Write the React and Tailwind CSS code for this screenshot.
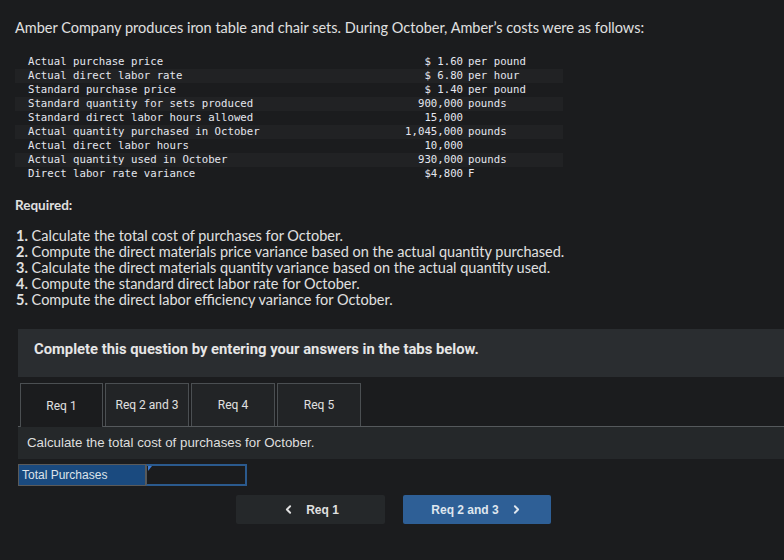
import React from 'react';
import { ChevronLeft, ChevronRight } from 'lucide-react';

const rows = [
  ['Actual purchase price', '$ 1.60', 'per pound'],
  ['Actual direct labor rate', '$ 6.80', 'per hour'],
  ['Standard purchase price', '$ 1.40', 'per pound'],
  ['Standard quantity for sets produced', '900,000', 'pounds'],
  ['Standard direct labor hours allowed', '15,000', ''],
  ['Actual quantity purchased in October', '1,045,000', 'pounds'],
  ['Actual direct labor hours', '10,000', ''],
  ['Actual quantity used in October', '930,000', 'pounds'],
  ['Direct labor rate variance', '$4,800', 'F'],
];

const steps = [
  'Calculate the total cost of purchases for October.',
  'Compute the direct materials price variance based on the actual quantity purchased.',
  'Calculate the direct materials quantity variance based on the actual quantity used.',
  'Compute the standard direct labor rate for October.',
  'Compute the direct labor efficiency variance for October.',
];

const tabs = [
  { label: 'Req 1', w: 'w-[83px]' },
  { label: 'Req 2 and 3', w: 'w-[84px]' },
  { label: 'Req 4', w: 'w-[84px]' },
  { label: 'Req 5', w: 'w-[84px]' },
];

export default function App() {
  return (
    <div className="w-[784px] h-[560px] overflow-hidden bg-[#1b1c1e] text-[#e0e0e0] font-['Lato',sans-serif]">
      <p className="pl-[15px] pt-[19px] text-[14.5px] leading-[18px]">
        Amber Company produces iron table and chair sets. During October, Amber’s costs were as follows:
      </p>

      {/* cost data */}
      <div className="mt-[18px] ml-[15px] w-[548px] font-['DejaVu_Sans_Mono',monospace] text-[10.7px] text-[#e4e6ee]">
        {rows.map((r, i) => (
          <div key={r[0]} className={`flex h-[14px] items-center ${i % 2 === 1 ? 'bg-[#212224]' : ''}`}>
            <span className="w-[385px] pl-[13px] whitespace-pre">{r[0]}</span>
            <span className="w-[63px] text-right whitespace-pre">{r[1]}</span>
            <span className="pl-[5px] whitespace-pre">{r[2]}</span>
          </div>
        ))}
      </div>

      <p className="pl-[15px] mt-[15px] text-[13.5px] font-bold leading-[18px]">Required:</p>

      <ol className="pl-[16px] mt-[14px] text-[14.5px] leading-[16px]">
        {steps.map((s, i) => (
          <li key={i}>
            <span className="font-bold">{i + 1}.</span> {s}
          </li>
        ))}
      </ol>

      <div className="ml-[18px] mt-[21px] h-[48px] bg-[#2a2d30] flex items-start pt-[11px] pl-[16px]">
        <span className="font-['Liberation_Sans_Narrow','Roboto',sans-serif] font-bold text-[14.8px] leading-[18px] text-[#e6e6e6]">
          Complete this question by entering your answers in the tabs below.
        </span>
      </div>

      {/* tabs */}
      <div className="ml-[18px] mt-[6px] flex items-end border-b border-[#55595c] pl-[2px] gap-[2px]">
        {tabs.map((t, i) => (
          <div
            key={t.label}
            className={`${t.w} h-[43px] flex items-center justify-center border border-b-0 border-[#4b4f52] font-['Liberation_Sans_Narrow','Roboto',sans-serif] text-[12px] text-[#e0e0e0] ${i === 0 ? 'bg-[#1b1c1e] -mb-px h-[44px]' : 'bg-[#222426]'}`}
          >
            {t.label}
          </div>
        ))}
      </div>

      <div className="ml-[18px] h-[32px] bg-[#25282a] flex items-center pl-[9px] font-['Liberation_Sans',sans-serif] text-[13.3px] text-[#dedede]">
        Calculate the total cost of purchases for October.
      </div>

      <div className="ml-[18px] mt-[5px] flex h-[22px] font-['Liberation_Sans',sans-serif] text-[12px]">
        <div className="w-[128px] bg-[#1a4a7f] border border-[#5a5a5a] flex items-center pl-[3px] text-[#dde3ea]">
          Total Purchases
        </div>
        <div className="relative w-[101px] border-2 border-[#2b5a8e] border-l-[#55595c] border-l bg-[#1b1c1e]">
          <span className="absolute left-[1px] top-0 w-0 h-0 border-t-[5px] border-t-[#3a7bd5] border-r-[4px] border-r-transparent" />
        </div>
      </div>

      <div className="mt-[9px] ml-[236px] flex gap-[18px] font-['Liberation_Sans',sans-serif] font-bold text-[12px]">
        <button className="w-[149px] h-[29px] rounded-[2px] bg-[#25282a] flex items-center justify-center gap-[11px] text-[#e0e0e0]">
          <ChevronLeft size={13} strokeWidth={3.5} />
          <span>Req 1</span>
        </button>
        <button className="w-[148px] h-[29px] rounded-[2px] bg-[#2e5f96] flex items-center justify-center gap-[11px] text-[#dfe6ee]">
          <span>Req 2 and 3</span>
          <ChevronRight size={13} strokeWidth={3.5} />
        </button>
      </div>
    </div>
  );
}
